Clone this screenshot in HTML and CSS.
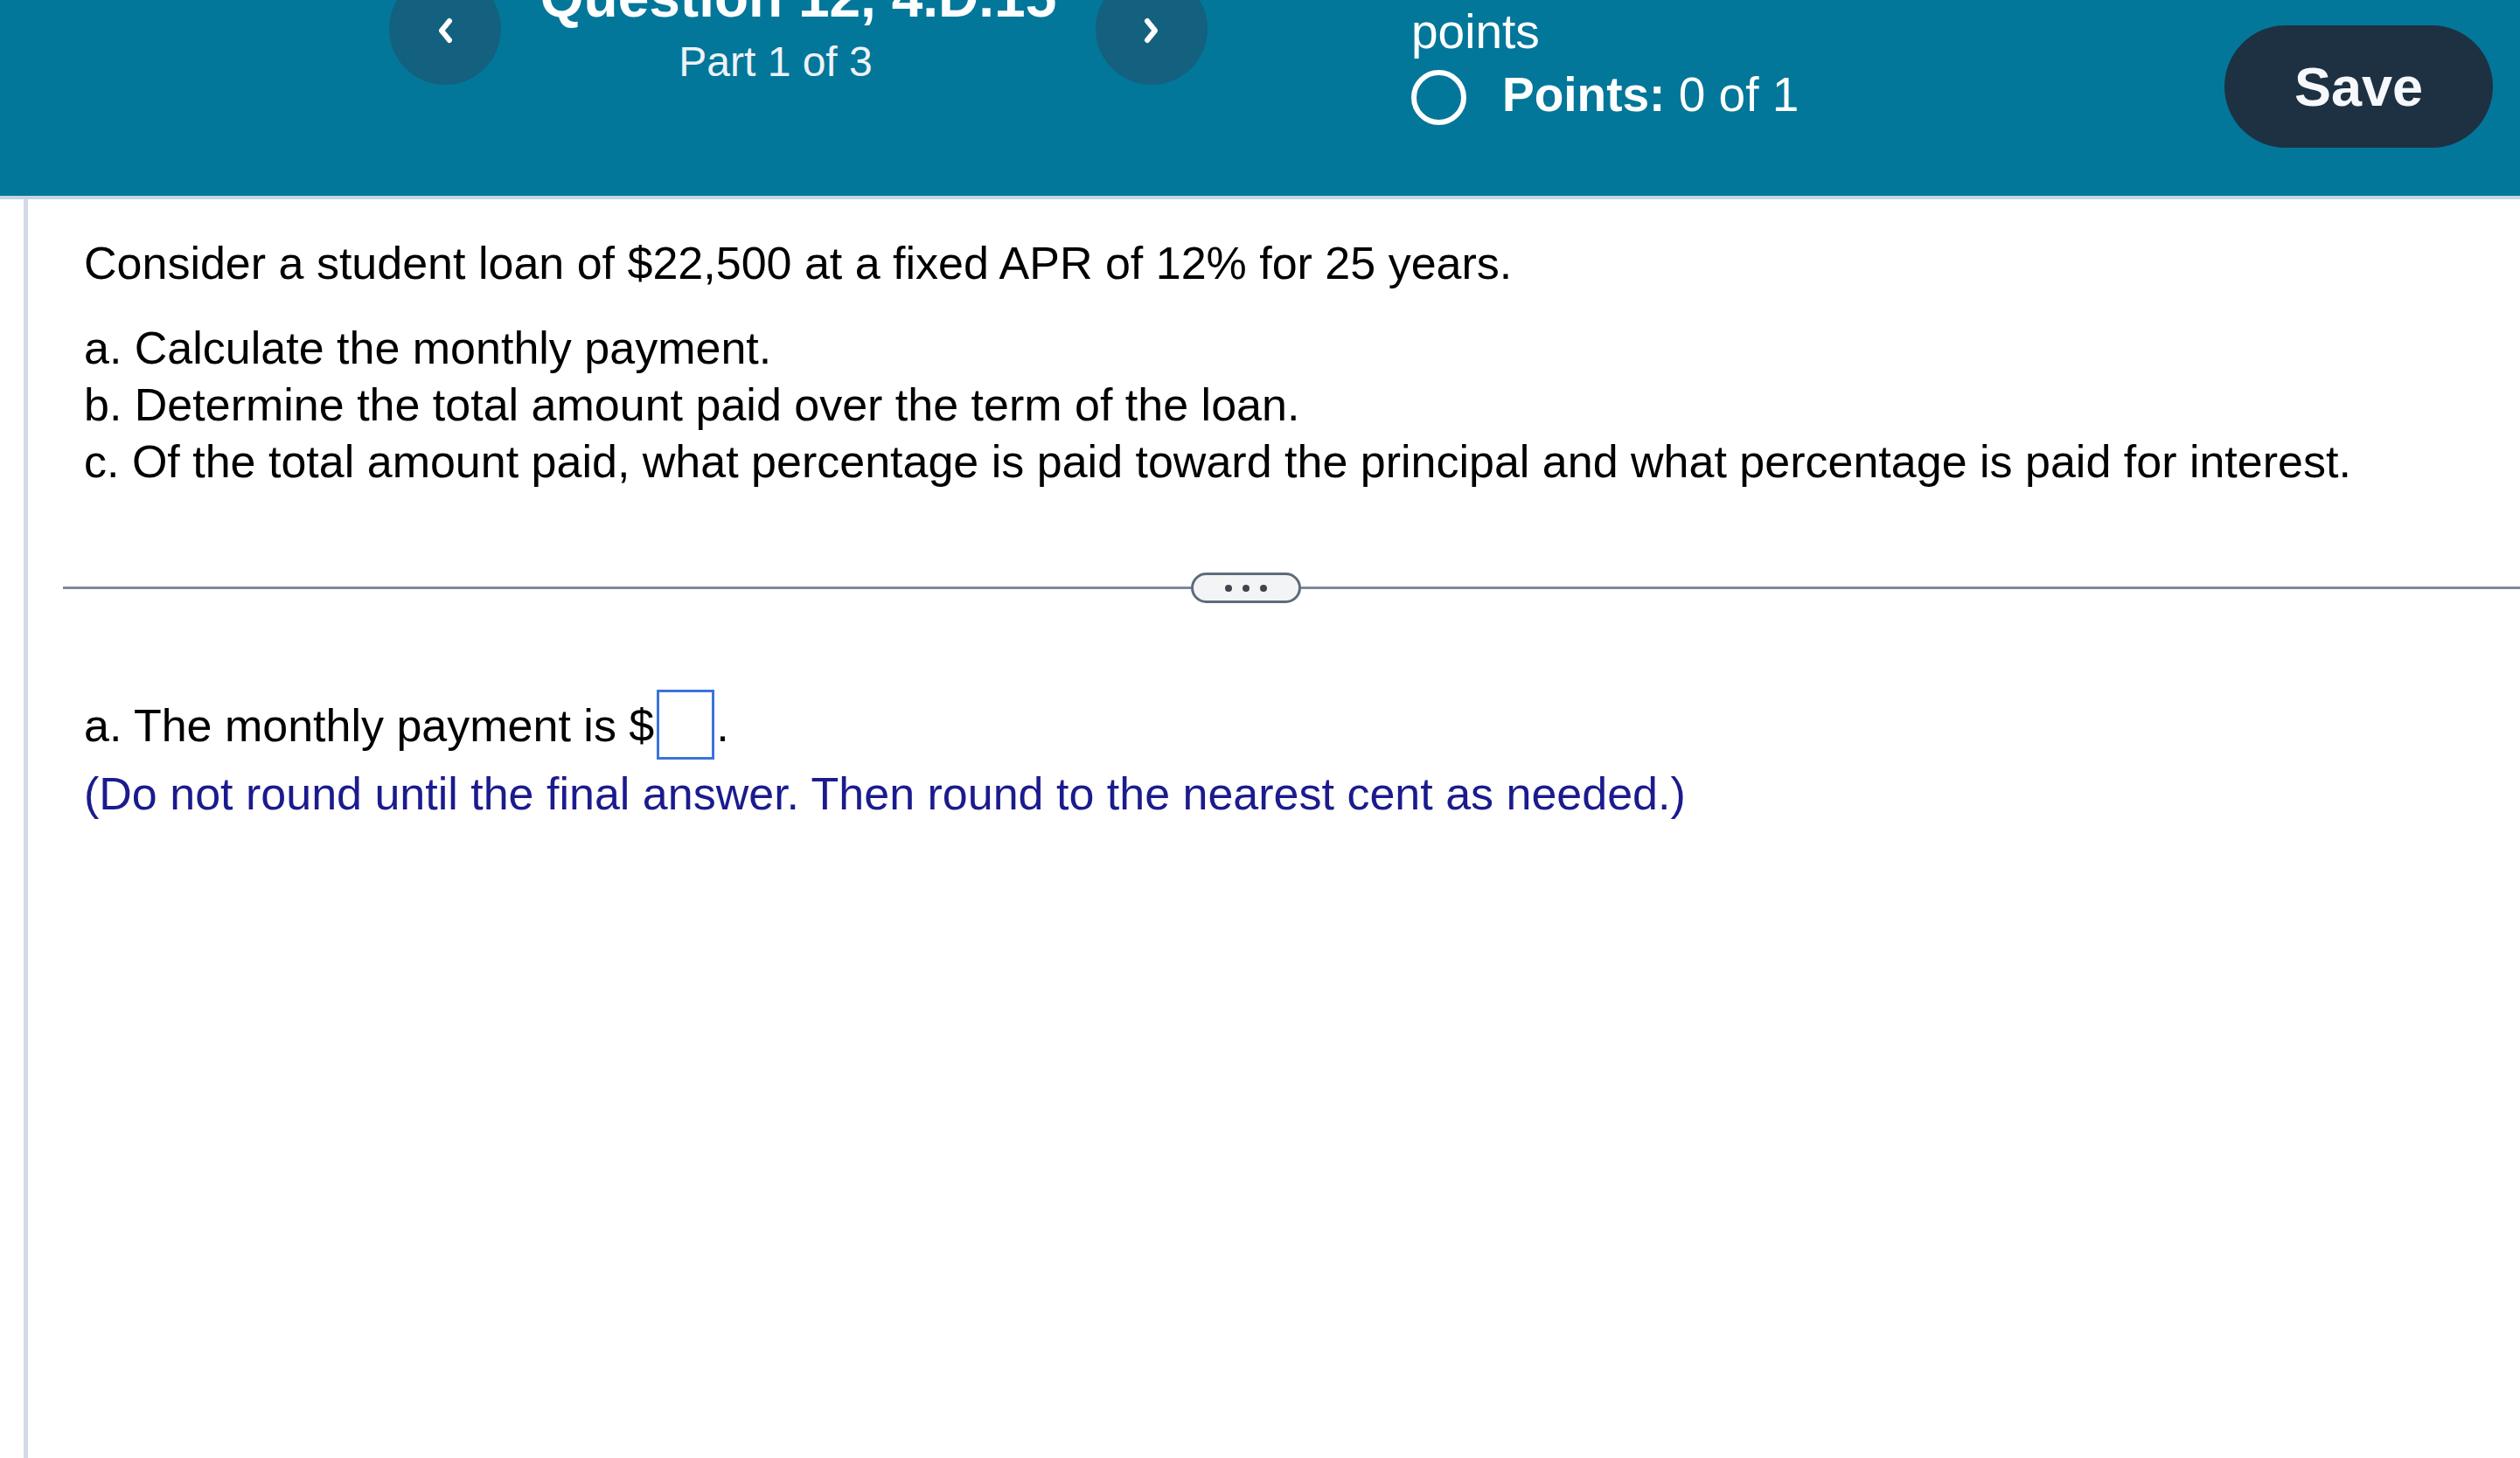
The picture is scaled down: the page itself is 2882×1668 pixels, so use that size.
FILE: index.html
```html
<!DOCTYPE html>
<html lang="en">
<head>
<meta charset="utf-8">
<title>Question 12, 4.D.15</title>
<link rel="stylesheet" href="styles.css">
</head>
<body>
<header class="topbar">
  <div class="nav">
    <button class="nav-btn" aria-label="Previous question">
      <svg class="chev" viewBox="0 0 20 32" width="20" height="32"><path d="M15 5 L6 16 L15 27" fill="none" stroke="#fff" stroke-width="6" stroke-linecap="round" stroke-linejoin="round"/></svg>
    </button>
    <div class="q-title">
      <div class="q-name">Question 12, 4.D.15</div>
      <div class="q-part">Part 1 of 3</div>
    </div>
    <button class="nav-btn" aria-label="Next question">
      <svg class="chev" viewBox="0 0 20 32" width="20" height="32"><path d="M5 5 L14 16 L5 27" fill="none" stroke="#fff" stroke-width="6" stroke-linecap="round" stroke-linejoin="round"/></svg>
    </button>
  </div>
  <div class="score">
    <div class="score-top">points</div>
    <div class="score-row"><span class="ring"></span><span><b>Points:</b> 0 of 1</span></div>
  </div>
  <button class="save">Save</button>
</header>
<main class="content">
  <div class="question">
    <p class="intro">Consider a student loan of $22,500 at a fixed APR of 12% for 25 years.</p>
    <ul class="parts">
      <li>a. Calculate the monthly payment.</li>
      <li>b. Determine the total amount paid over the term of the loan.</li>
      <li>c. Of the total amount paid, what percentage is paid toward the principal and what percentage is paid for interest.</li>
    </ul>
  </div>
  <div class="divider">
    <span class="rule rule-left"></span>
    <span class="pill"><i></i><i></i><i></i></span>
    <span class="rule rule-right"></span>
  </div>
  <div class="answer">
    <p class="ans-line">a. The monthly payment is $<span class="ans-box"></span>.</p>
    <p class="hint">(Do not round until the final answer. Then round to the nearest cent as needed.)</p>
  </div>
</main>
</body>
</html>
```
FILE: styles.css
```css
html, body {
  margin: 0;
  padding: 0;
  background: #ffffff;
}
body {
  font-family: "Liberation Sans", Arial, sans-serif;
  color: #000;
  overflow: hidden;
}

/* Header bar */
.topbar {
  display: flex;
  align-items: flex-start;
  height: 224px;
  background: #03779a;
  border-bottom: 4px solid #c3d5e3;
  padding-left: 445px;
  color: #fff;
  overflow: hidden;
}
.nav {
  display: flex;
  align-items: flex-start;
}
.nav-btn {
  width: 128px;
  height: 128px;
  margin-top: -31px;
  padding: 0;
  border: 0;
  border-radius: 50%;
  background: #14607f;
  display: flex;
  align-items: center;
  justify-content: center;
  flex: none;
}
.chev {
  display: block;
  margin-top: 4px;
}
.q-title {
  width: 680px;
  text-align: center;
}
.q-name {
  font-weight: 700;
  font-size: 64px;
  line-height: 64px;
  margin-top: -35px;
  white-space: nowrap;
}
.q-part {
  font-size: 48px;
  line-height: 48px;
  margin-top: 18px;
  padding-right: 52px;
  color: #eef3f7;
}

.score {
  margin-left: 233px;
  font-size: 55px;
  line-height: 66px;
}
.score-top {
  margin-top: 3px;
}
.score-row {
  display: flex;
  align-items: flex-start;
  margin-top: 6px;
  white-space: nowrap;
}
.ring {
  width: 51px;
  height: 51px;
  border: 6px solid #fff;
  border-radius: 50%;
  margin-top: 5px;
  margin-right: 41px;
  flex: none;
}

.save {
  margin-left: auto;
  margin-right: 31px;
  margin-top: 29px;
  width: 307px;
  height: 140px;
  border: 0;
  border-radius: 70px;
  background: #1d3142;
  color: #f6f8fb;
  font-family: "Liberation Sans", Arial, sans-serif;
  font-weight: 700;
  font-size: 63px;
  padding: 0;
  flex: none;
}

/* Content */
.content {
  box-sizing: border-box;
  min-height: 1440px;
  margin-left: 27px;
  border-left: 5px solid #d4d9e7;
  padding-left: 40px;
  padding-top: 41px;
}
.question,
.answer {
  padding-left: 24px;
}
.intro {
  margin: 0;
  font-size: 52px;
  line-height: 65px;
}
.parts {
  margin: 32px 0 0;
  padding: 0;
  list-style: none;
  font-size: 52px;
  line-height: 65px;
}

.divider {
  display: flex;
  align-items: center;
  height: 35px;
  margin-top: 94px;
}
.rule {
  height: 3px;
  background: #7d8999;
}
.rule-left {
  width: 1290px;
  flex: none;
}
.rule-right {
  flex: 1;
}
.pill {
  box-sizing: border-box;
  width: 126px;
  height: 35px;
  border: 3px solid #5e6b7c;
  border-radius: 18px;
  background: #f3f4f6;
  display: flex;
  align-items: center;
  justify-content: center;
  gap: 12px;
  flex: none;
}
.pill i {
  width: 8px;
  height: 8px;
  border-radius: 50%;
  background: #3f454d;
}

.answer {
  margin-top: 99px;
}
.ans-line {
  margin: 0;
  font-size: 52px;
  line-height: 65px;
}
.ans-box {
  display: inline-block;
  box-sizing: border-box;
  width: 66px;
  height: 80px;
  border: 3px solid #3b74da;
  vertical-align: -21px;
  margin-left: 3px;
  margin-right: 2px;
}
.hint {
  margin: 7px 0 0;
  color: #1b1b8e;
  font-size: 52px;
  line-height: 65px;
}
```
